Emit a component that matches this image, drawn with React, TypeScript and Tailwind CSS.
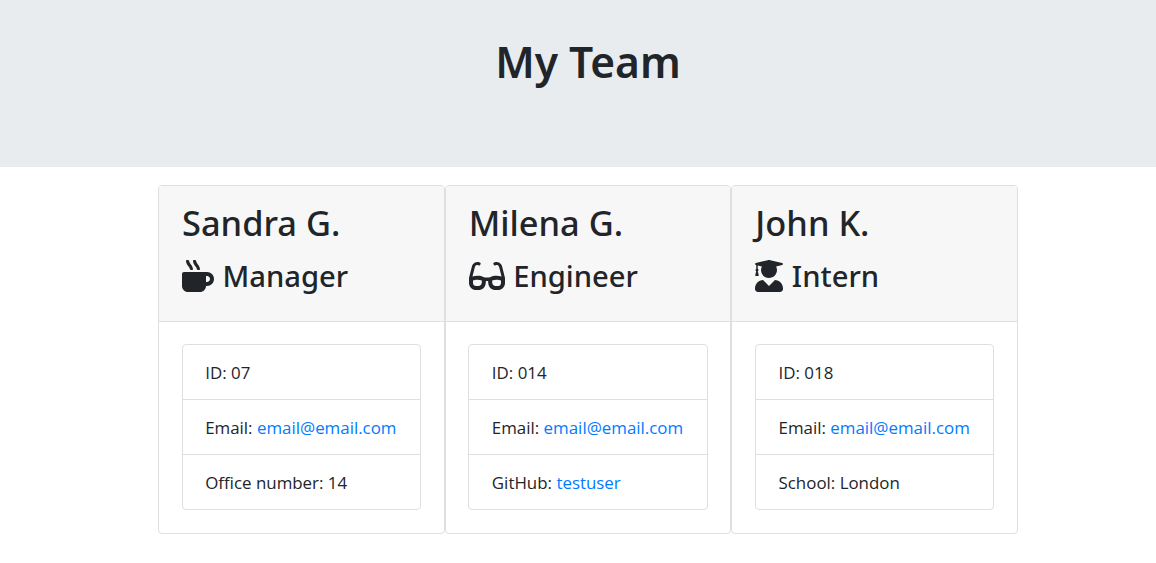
import { FaGlasses, FaMugHot, FaUserGraduate } from "react-icons/fa";
import type { ReactNode } from "react";

type Member = {
  name: string;
  role: string;
  icon: ReactNode;
  id: string;
  lastLabel: string;
  lastValue: string;
  lastIsLink?: boolean;
};

const team: Member[] = [
  {
    name: "Sandra G.",
    role: "Manager",
    icon: <FaMugHot className="w-[32px] h-[32px]" />,
    id: "07",
    lastLabel: "Office number:",
    lastValue: "14",
  },
  {
    name: "Milena G.",
    role: "Engineer",
    icon: <FaGlasses className="w-[36px] h-[32px]" />,
    id: "014",
    lastLabel: "GitHub:",
    lastValue: "testuser",
    lastIsLink: true,
  },
  {
    name: "John K.",
    role: "Intern",
    icon: <FaUserGraduate className="w-[28px] h-[32px]" />,
    id: "018",
    lastLabel: "School:",
    lastValue: "London",
  },
];

function Row({ children, last }: { children: ReactNode; last?: boolean }) {
  return (
    <li className={`flex items-center px-[22.6px] pt-[2px] whitespace-pre ${last ? "h-[54px]" : "h-[55px] border-b border-[#dfdfdf]"}`}>
      {children}
    </li>
  );
}

function Card({ member }: { member: Member }) {
  return (
    <div className="border border-[#dfdfdf] rounded-[4px] h-[349px] overflow-hidden">
      <div className="h-[136px] bg-[#f7f7f7] border-b border-[#dfdfdf] px-[23px] pt-[12px] font-['Noto_Sans',sans-serif]">
        <h2 className="text-[34.4px] leading-[49px] font-medium">{member.name}</h2>
        <h3 className="flex items-center gap-[8.5px] text-[29.2px] leading-[56px] font-medium">
          {member.icon}
          <span className="pt-px">{member.role}</span>
        </h3>
      </div>
      <div className="p-[22px] px-[22.6px]">
        <ul className="border border-[#dfdfdf] rounded-[4px] text-[16.9px]">
          <Row>ID: {member.id}</Row>
          <Row>
            Email: <a className="text-[#007bff]">email@email.com</a>
          </Row>
          <Row last>
            {member.lastLabel}{" "}
            {member.lastIsLink ? <a className="text-[#007bff]">{member.lastValue}</a> : member.lastValue}
          </Row>
        </ul>
      </div>
    </div>
  );
}

export default function App() {
  return (
    <div className="min-h-[563px] bg-white text-[#212529] font-['Open_Sans','Noto_Sans',sans-serif]">
      <header className="h-[167px] bg-[#e9ecef] pl-5 pt-[31px] font-['Noto_Sans',sans-serif]">
        <h1 className="text-center text-[42.5px] leading-[62px] font-semibold">My Team</h1>
      </header>
      <main className="pl-5 pt-[18px] flex justify-center">
        <div className="w-[860px] grid grid-cols-3">
          {team.map((m) => (
            <Card key={m.name} member={m} />
          ))}
        </div>
      </main>
    </div>
  );
}
